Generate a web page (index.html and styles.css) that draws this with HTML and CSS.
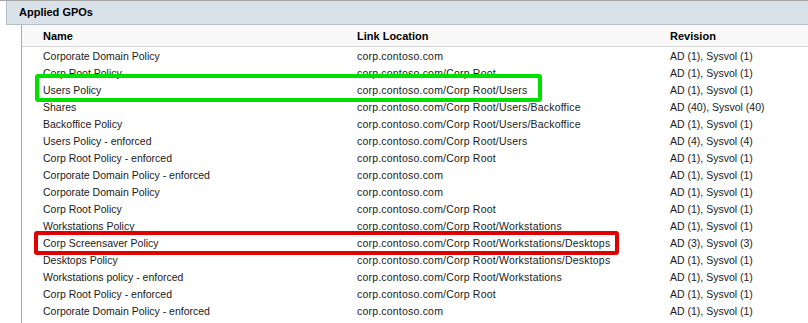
FILE: index.html
```html
<!DOCTYPE html>
<html>
<head>
<meta charset="utf-8">
<link rel="stylesheet" href="styles.css">
</head>
<body>
<div class="panel">
  <div class="titlebar">Applied GPOs</div>
  <div class="content">
    <div class="row head">
      <span class="c-name">Name</span><span class="c-link">Link Location</span><span class="c-rev">Revision</span>
    </div>
    <div class="row"><span class="c-name">Corporate Domain Policy</span><span class="c-link">corp.contoso.com</span><span class="c-rev">AD (1), Sysvol (1)</span></div>
    <div class="row"><span class="c-name">Corp Root Policy</span><span class="c-link">corp.contoso.com/Corp Root</span><span class="c-rev">AD (1), Sysvol (1)</span></div>
    <div class="row"><span class="c-name">Users Policy</span><span class="c-link">corp.contoso.com/Corp Root/Users</span><span class="c-rev">AD (1), Sysvol (1)</span><span class="hl hl-green"></span></div>
    <div class="row"><span class="c-name">Shares</span><span class="c-link">corp.contoso.com/Corp Root/Users/Backoffice</span><span class="c-rev">AD (40), Sysvol (40)</span></div>
    <div class="row"><span class="c-name">Backoffice Policy</span><span class="c-link">corp.contoso.com/Corp Root/Users/Backoffice</span><span class="c-rev">AD (1), Sysvol (1)</span></div>
    <div class="row"><span class="c-name">Users Policy - enforced</span><span class="c-link">corp.contoso.com/Corp Root/Users</span><span class="c-rev">AD (4), Sysvol (4)</span></div>
    <div class="row"><span class="c-name">Corp Root Policy - enforced</span><span class="c-link">corp.contoso.com/Corp Root</span><span class="c-rev">AD (1), Sysvol (1)</span></div>
    <div class="row"><span class="c-name">Corporate Domain Policy - enforced</span><span class="c-link">corp.contoso.com</span><span class="c-rev">AD (1), Sysvol (1)</span></div>
    <div class="row"><span class="c-name">Corporate Domain Policy</span><span class="c-link">corp.contoso.com</span><span class="c-rev">AD (1), Sysvol (1)</span></div>
    <div class="row"><span class="c-name">Corp Root Policy</span><span class="c-link">corp.contoso.com/Corp Root</span><span class="c-rev">AD (1), Sysvol (1)</span></div>
    <div class="row"><span class="c-name">Workstations Policy</span><span class="c-link">corp.contoso.com/Corp Root/Workstations</span><span class="c-rev">AD (1), Sysvol (1)</span></div>
    <div class="row"><span class="c-name">Corp Screensaver Policy</span><span class="c-link">corp.contoso.com/Corp Root/Workstations/Desktops</span><span class="c-rev">AD (3), Sysvol (3)</span><span class="hl hl-red"></span></div>
    <div class="row"><span class="c-name">Desktops Policy</span><span class="c-link">corp.contoso.com/Corp Root/Workstations/Desktops</span><span class="c-rev">AD (1), Sysvol (1)</span></div>
    <div class="row"><span class="c-name">Workstations policy - enforced</span><span class="c-link">corp.contoso.com/Corp Root/Workstations</span><span class="c-rev">AD (1), Sysvol (1)</span></div>
    <div class="row"><span class="c-name">Corp Root Policy - enforced</span><span class="c-link">corp.contoso.com/Corp Root</span><span class="c-rev">AD (1), Sysvol (1)</span></div>
    <div class="row"><span class="c-name">Corporate Domain Policy - enforced</span><span class="c-link">corp.contoso.com</span><span class="c-rev">AD (1), Sysvol (1)</span></div>
  </div>
</div>
</body>
</html>
```
FILE: styles.css
```css
html, body {
  margin: 0;
  padding: 0;
  background: #ffffff;
}
body {
  font-family: "Liberation Sans", Arial, sans-serif;
  font-size: 10.5px;
  color: #1a1a1a;
  overflow: hidden;
}
.panel {
  border-top: 1px solid #a6a6a6;
  height: 322px;
  display: flex;
  flex-direction: column;
}
.titlebar {
  margin-left: 6px;
  height: 23px;
  line-height: 23px;
  padding-left: 12px;
  background: #dae2e9;
  border-left: 1px solid #b6bec6;
  border-bottom: 1px solid #b6bec6;
  font-weight: bold;
  font-size: 11px;
  color: #000;
}
.content {
  margin-left: 21px;
  border-left: 1px solid #ababab;
  flex: 1;
}
.row {
  position: relative;
  display: grid;
  grid-template-columns: 314px 313px 1fr;
  padding-left: 21px;
  height: 17px;
  line-height: 17px;
  white-space: nowrap;
}
.row.head {
  height: 21px;
  line-height: 23px;
  background: #f9f9f9;
  border-bottom: 1px solid #d6d6d6;
  margin-bottom: 1px;
  font-weight: bold;
  font-size: 11px;
  color: #000;
}
.c-link {
  letter-spacing: 0.2px;
}
.row.head .c-link {
  letter-spacing: 0;
}
.hl {
  position: absolute;
  box-sizing: border-box;
  border-radius: 3px;
  pointer-events: none;
}
.hl-green {
  left: 13px;
  top: -8px;
  width: 507px;
  height: 28px;
  border: 4px solid #00e000;
}
.hl-red {
  left: 12px;
  top: -4px;
  width: 585px;
  height: 24px;
  border: 4px solid #e00000;
}
```
